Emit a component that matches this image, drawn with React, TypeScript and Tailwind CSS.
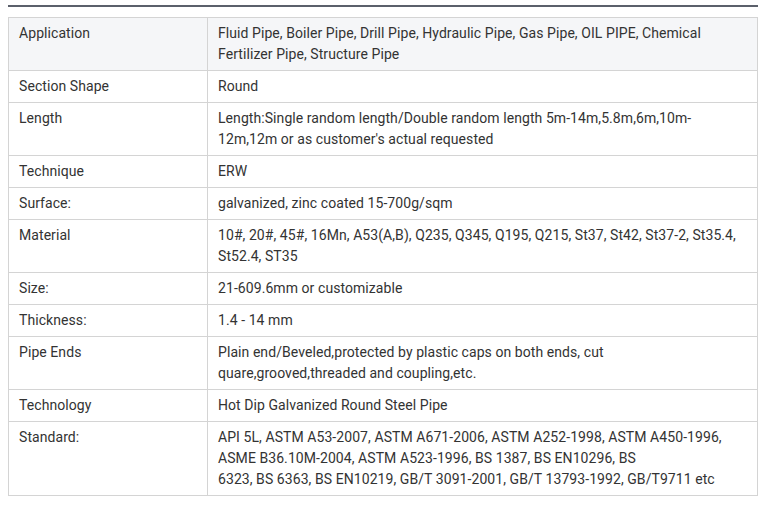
import React from "react";

const rows: [string, React.ReactNode][] = [
  ["Application", <>Fluid Pipe, Boiler Pipe, Drill Pipe, Hydraulic Pipe, Gas Pipe, OIL PIPE, Chemical<br />Fertilizer Pipe, Structure Pipe</>],
  ["Section Shape", "Round"],
  ["Length", <>Length:Single random length/Double random length 5m-14m,5.8m,6m,10m-<br />12m,12m or as customer's actual requested</>],
  ["Technique", "ERW"],
  ["Surface:", "galvanized, zinc coated 15-700g/sqm"],
  ["Material", <>10#, 20#, 45#, 16Mn, A53(A,B), Q235, Q345, Q195, Q215, St37, St42, St37-2, St35.4,<br />St52.4, ST35</>],
  ["Size:", "21-609.6mm or customizable"],
  ["Thickness:", "1.4 - 14 mm"],
  ["Pipe Ends", <>Plain end/Beveled,protected by plastic caps on both ends, cut<br />quare,grooved,threaded and coupling,etc.</>],
  ["Technology", "Hot Dip Galvanized Round Steel Pipe"],
  ["Standard:", <>API 5L, ASTM A53-2007, ASTM A671-2006, ASTM A252-1998, ASTM A450-1996,<br />ASME B36.10M-2004, ASTM A523-1996, BS 1387, BS EN10296, BS<br />6323, BS 6363, BS EN10219, GB/T 3091-2001, GB/T 13793-1992, GB/T9711 etc</>],
];

export default function App() {
  return (
    <div className="w-[766px] h-[506px] bg-white pt-[5px] pl-[8px] font-['Roboto',sans-serif] text-[14px] leading-[21px] tracking-[0.07px] text-[#333]">
      <div className="w-[750px] h-[2px] bg-[#5b606b]" />
      <table className="mt-[10px] w-[750px] border-collapse table-fixed">
        <colgroup>
          <col className="w-[199px]" />
          <col />
        </colgroup>
        <tbody>
          {rows.map(([k, v], i) => (
            <tr key={k} className={i === 0 ? "bg-[#f5f6f8]" : "bg-white"}>
              <td className="border border-[#d4d4d4] px-[10px] py-[5px] align-top">{k}</td>
              <td className="border border-[#d4d4d4] px-[10px] py-[5px] align-top whitespace-nowrap">{v}</td>
            </tr>
          ))}
        </tbody>
      </table>
    </div>
  );
}
